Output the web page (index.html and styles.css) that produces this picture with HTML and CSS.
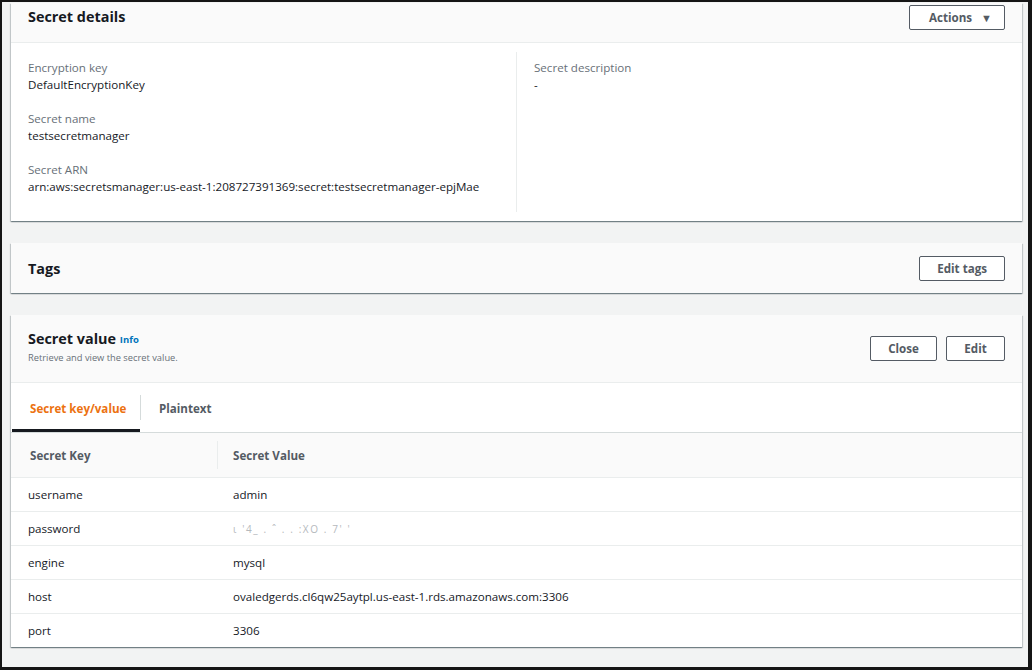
FILE: index.html
```html
<!DOCTYPE html>
<html lang="en">
<head>
<meta charset="utf-8">
<title>Secret details</title>
<link rel="stylesheet" href="styles.css">
</head>
<body>
<div class="page">
  <section class="card">
    <div class="card-head head-details">
      <h2 class="card-title">Secret details</h2>
      <button class="btn btn-actions">Actions <span class="caret">&#9660;</span></button>
    </div>
    <div class="details-body">
      <div class="col">
        <div class="field">
          <div class="label">Encryption key</div>
          <div class="value">DefaultEncryptionKey</div>
        </div>
        <div class="field">
          <div class="label">Secret name</div>
          <div class="value">testsecretmanager</div>
        </div>
        <div class="field">
          <div class="label">Secret ARN</div>
          <div class="value">arn:aws:secretsmanager:us-east-1:208727391369:secret:testsecretmanager-epjMae</div>
        </div>
      </div>
      <div class="col col-right">
        <div class="field">
          <div class="label">Secret description</div>
          <div class="value">-</div>
        </div>
      </div>
    </div>
  </section>

  <section class="card">
    <div class="card-head head-tags">
      <h2 class="card-title">Tags</h2>
      <button class="btn">Edit tags</button>
    </div>
  </section>

  <section class="card">
    <div class="card-head head-value">
      <div class="head-text">
        <h2 class="card-title title-value">Secret value <a class="info" href="#">Info</a></h2>
        <p class="subtitle">Retrieve and view the secret value.</p>
      </div>
      <div class="actions">
        <button class="btn btn-close">Close</button>
        <button class="btn btn-edit">Edit</button>
      </div>
    </div>
    <div class="tabs">
      <div class="tab active">Secret key/value</div>
      <div class="tab-sep"></div>
      <div class="tab">Plaintext</div>
    </div>
    <table class="kv">
      <thead>
        <tr><th class="c-key">Secret Key</th><th class="c-val"><span class="th-sep"></span>Secret Value</th></tr>
      </thead>
      <tbody>
        <tr><td class="c-key">username</td><td class="c-val">admin</td></tr>
        <tr><td class="c-key">password</td><td class="c-val"><span class="masked">ι '4_ . ˆ . . :XO . 7' '</span></td></tr>
        <tr><td class="c-key">engine</td><td class="c-val">mysql</td></tr>
        <tr><td class="c-key">host</td><td class="c-val">ovaledgerds.cl6qw25aytpl.us-east-1.rds.amazonaws.com:3306</td></tr>
        <tr><td class="c-key">port</td><td class="c-val">3306</td></tr>
      </tbody>
    </table>
  </section>
</div>
</body>
</html>
```

FILE: styles.css
```css
* { box-sizing: border-box; }

html { background: #111; }

body {
  margin: 0;
  width: 1032px;
  height: 670px;
  overflow: hidden;
  border-style: solid;
  border-color: #151515;
  border-width: 2px 4px 3px 2px;
  background: #f2f3f3;
  font-family: "Open Sans", "Noto Sans", Arial, sans-serif;
  font-size: 11.6px;
  color: #16191f;
}

.page {
  padding: 1px 6px 0 9px;
  display: flex;
  flex-direction: column;
  gap: 22px;
}

.card {
  background: #fff;
  box-shadow: 0 1px 1px 0 rgba(0, 28, 36, 0.35), 1px 1px 1px 0 rgba(0, 28, 36, 0.15), -1px 1px 1px 0 rgba(0, 28, 36, 0.15);
}

.card-head {
  background: #fafafa;
  display: flex;
  justify-content: space-between;
  padding: 0 17px;
}

.card-title {
  margin: 0;
  font-size: 14.4px;
  font-weight: 700;
  line-height: 25px;
  color: #16191f;
  white-space: nowrap;
}

.head-details {
  height: 40px;
  align-items: flex-start;
  padding-top: 1px;
  border-bottom: 1px solid #eaeded;
}

.head-tags {
  height: 50px;
  align-items: center;
}

.head-value {
  height: 68px;
  align-items: flex-start;
  border-bottom: 1px solid #eaeded;
}

.head-text { padding-top: 13px; }

.title-value { line-height: 22px; }

.info {
  color: #0073bb;
  font-size: 9.5px;
  font-weight: 700;
  text-decoration: none;
  vertical-align: 1px;
}

.subtitle {
  margin: 0;
  font-size: 9.3px;
  line-height: 14px;
  color: #687078;
  white-space: nowrap;
}

.actions {
  display: flex;
  gap: 9px;
  padding-top: 21px;
}

.btn {
  font-family: inherit;
  font-size: 11.6px;
  font-weight: 700;
  color: #545b64;
  background: #fff;
  border: 1px solid #545b64;
  border-radius: 2px;
  height: 25px;
  padding: 0 17px;
  line-height: 23px;
  white-space: nowrap;
}

.btn-actions {
  margin-top: 1px;
  width: 96px;
  display: flex;
  align-items: center;
  padding: 0 0 0 19px;
}

.caret {
  font-size: 11px;
  margin-left: 9px;
  color: #545b64;
}

.btn-close { width: 67px; padding: 0; }
.btn-edit { width: 59px; padding: 0; }

.details-body {
  display: grid;
  grid-template-columns: 505px 1fr;
  padding: 9px 0;
}

.col {
  display: flex;
  flex-direction: column;
  gap: 17px;
  padding: 7px 17px 17px;
}

.col-right {
  border-left: 1px solid #eaeded;
  padding-left: 17px;
}

.label {
  color: #687078;
  line-height: 17px;
}

.value {
  line-height: 17px;
  color: #16191f;
}

.tabs {
  display: flex;
  align-items: center;
  height: 50px;
  border-bottom: 1px solid #d5dbdb;
  padding-left: 1px;
}

.tab {
  height: 100%;
  display: flex;
  align-items: center;
  padding: 2px 18px 0;
  font-weight: 700;
  color: #545b64;
  white-space: nowrap;
}

.tab.active {
  color: #ec7211;
  box-shadow: inset 0 -3px 0 #16191f;
  width: 128px;
  padding: 2px 0 0 18px;
}

.tab-sep {
  width: 1px;
  height: 25px;
  background: #d5dbdb;
}

.kv {
  width: 100%;
  border-collapse: collapse;
}

.kv th {
  background: #fafafa;
  height: 44px;
  padding-top: 3px;
  text-align: left;
  font-weight: 700;
  color: #545b64;
  border-bottom: 1px solid #eaeded;
  position: relative;
}

.kv td {
  height: 34px;
  border-top: 1px solid #eaeded;
  color: #16191f;
}

.kv tbody tr:first-child td { border-top: 0; }

.c-key { width: 206px; padding-left: 17px; }
.kv th.c-key { padding-left: 19px; }
.c-val { padding-left: 16px; }

.th-sep {
  position: absolute;
  left: 0;
  top: 8px;
  bottom: 8px;
  width: 1px;
  background: #eaeded;
}

.masked {
  color: #b5b9bd;
  letter-spacing: 1.6px;
  font-size: 10px;
}
```
